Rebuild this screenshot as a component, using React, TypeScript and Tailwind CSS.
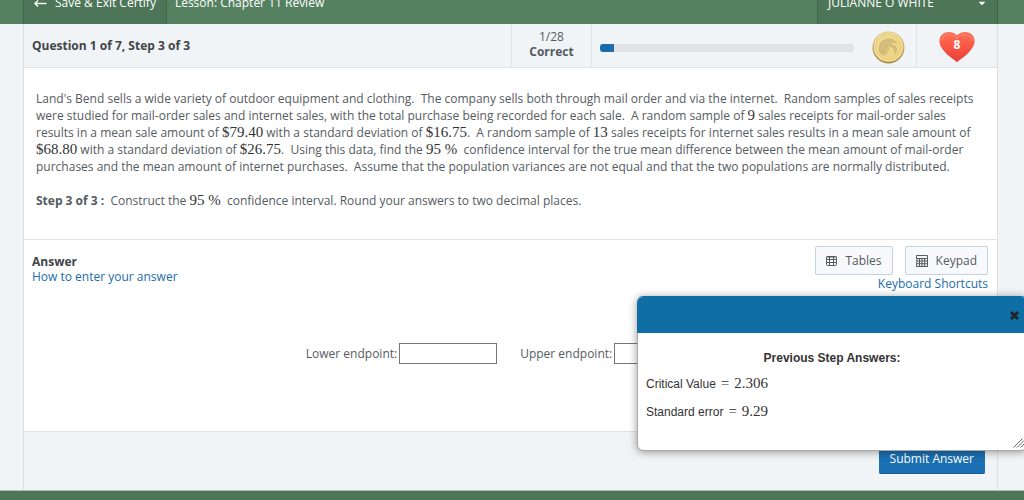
import React, { useState } from "react";
import { FaCaretDown } from "react-icons/fa";

const MathText = ({ children }: { children: React.ReactNode }) => (
  <span className="font-['Liberation_Serif',serif] text-[15px] leading-none text-[#333]">
    {children}
  </span>
);

const BackArrow = () => (
  <svg width="13" height="9" viewBox="0 0 13 9" fill="none" stroke="currentColor">
    <path d="M1 4.5h11.5" strokeWidth="1.4" />
    <path d="M4 1.5 1 4.5l3 3" strokeWidth="1.4" />
  </svg>
);

const Coin = () => (
  <svg width="33" height="33" viewBox="0 0 33 33" role="img" aria-label="Coin">
    <defs>
      <linearGradient id="coinRim" x1="0" y1="0" x2="0" y2="1">
        <stop offset="0" stopColor="#d9c07c" />
        <stop offset="1" stopColor="#a88a48" />
      </linearGradient>
      <linearGradient id="coinFace" x1="0" y1="0" x2="1" y2="1">
        <stop offset="0" stopColor="#f0dc9a" />
        <stop offset="1" stopColor="#ecd07c" />
      </linearGradient>
    </defs>
    <circle cx="16.5" cy="16.5" r="16" fill="url(#coinRim)" />
    <circle cx="16.5" cy="16" r="14.8" fill="#f3df95" />
    <circle cx="16.5" cy="16" r="12.8" fill="url(#coinFace)" stroke="#e2c97e" strokeWidth="0.8" />
    <path
      d="M7 20C6 13 10 8 16 7.500c4-.3 7.500 1.500 9.500 5-3-1-5.500-.8-7 .5 3 .2 6 2 6.500 5 .3 2-.5 4-2 5.500-.5-4-2-7-5-8.500-.5 4-2.500 7.500-6 9.500-2.500-.5-4.500-2-5-4.500z"
      fill="#d2ba78"
    />
    <path d="M9.500 19c1-5 4-7.500 9-8" fill="none" stroke="#e4ce8c" strokeWidth="1" />
    <path d="M12.500 21.500c2.500-2 4-4.500 4.500-7.500" fill="none" stroke="#e4ce8c" strokeWidth="1" />
  </svg>
);

const Heart = () => (
  <div className="relative h-8 w-9">
    <svg width="36" height="32" viewBox="0 0 36 32">
      <defs>
        <linearGradient id="heartFill" x1="0" y1="0" x2="0" y2="1">
          <stop offset="0" stopColor="#fb7358" />
          <stop offset="0.5" stopColor="#f95545" />
          <stop offset="1" stopColor="#e83d38" />
        </linearGradient>
      </defs>
      <path
        d="M18 31.200C14 27.500 8 24.500 3.800 18.500 1.500 15.200.4 13 .4 10.300.4 4.800 4.500 1 9.500 1c3.500 0 6.500 1.200 8.500 3.300C20 2.200 23 1 26.500 1c5 0 9.100 3.800 9.100 9.300 0 2.700-1.100 4.900-3.400 8.200C28 24.500 22 27.500 18 31.200z"
        fill="url(#heartFill)"
      />
      <path d="M3 10c.3-4 3-6.500 6.500-6.500S16 5 18 7c2-2 5-3.500 8.500-3.500S32.700 6 33 10" fill="none" stroke="#fc8468" strokeWidth="1.200" />
    </svg>
    <span className="absolute inset-0 flex items-center justify-center pb-1 text-xs font-bold text-white">
      8
    </span>
  </div>
);

const TableIcon = () => (
  <svg width="11" height="10" viewBox="0 0 11 10" fill="none" stroke="#555b61">
    <rect x="0.500" y="0.500" width="10" height="9" rx="1" />
    <path d="M0.500 1h10M0.500 3.500h10M0.500 6.500h10M3.500 0.500v9M7.500 0.500v9" />
  </svg>
);

const KeypadIcon = () => (
  <svg width="12" height="12" viewBox="0 0 12 12" fill="none" stroke="#555b61">
    <path d="M0.500 0.500h11v3h-11zM1 3.500l-.5 8h11v-8" />
    <path d="M0.800 6h10.700M0.800 8.700h10.700M3.500 3.500v8M6 3.500v8M8.700 3.500v8" />
  </svg>
);

const CloseIcon = () => (
  <svg width="9" height="9" viewBox="0 0 9 9" stroke="#222" strokeWidth="2.800">
    <path d="M1 1l7 7M8 1L1 8" />
  </svg>
);

const toolButton =
  "flex h-[29px] cursor-pointer items-center gap-2 rounded-[2px] border border-[#c3d2dc] bg-[#f7f9fc] px-[10px] text-xs text-[#555b61]";

const StepAnswers = ({ onClose }: { onClose: () => void }) => (
  <div
    role="dialog"
    aria-label="Previous Step Answers"
    className="absolute top-[296px] -right-[3px] h-[155px] w-[390px] rounded-md border border-[#aaa] border-t-[#0f6fa4] bg-white font-['Liberation_Sans',sans-serif] text-xs text-[#333] shadow-[0_1px_8px_rgba(0,0,0,0.4)]"
  >
    <div className="-mx-px flex h-9 items-center justify-end rounded-t-md bg-[#0f6fa4] pr-2">
      <button type="button" aria-label="Close" onClick={onClose} className="cursor-pointer">
        <CloseIcon />
      </button>
    </div>
    <div className="px-2 pt-[17px]">
      <h2 className="text-center leading-4 font-bold">Previous Step Answers:</h2>
      <p className="mt-2 flex items-baseline gap-[5px] leading-5">
        Critical Value <MathText>=</MathText> <MathText>2.306</MathText>
      </p>
      <p className="mt-2 flex items-baseline gap-[5px] leading-5">
        Standard error <MathText>=</MathText> <MathText>9.29</MathText>
      </p>
    </div>
    <svg className="absolute right-[2px] bottom-[2px]" width="11" height="10" viewBox="0 0 11 10" stroke="#666">
      <path d="M0.500 9.500l9-9M4 9.500l7-7M7.500 9.500l3.500-3.500" />
    </svg>
  </div>
);

const App = () => {
  const [showSteps, setShowSteps] = useState(true);

  return (
    <div className="relative flex min-h-screen flex-col overflow-hidden bg-[#f0f4f7] font-['Open_Sans',sans-serif] text-xs text-[#555b61]">
      <header className="-mt-[18px] flex h-[42px] shrink-0 bg-[#558160] pr-[26px] pl-[23px] text-white">
        <a href="#exit" className="flex items-center gap-2 border-x border-[#406648] bg-[#4d7658] px-[10px]">
          <BackArrow />
          Save &amp; Exit Certify
        </a>
        <div className="flex flex-1 items-center px-2">Lesson: Chapter 11 Review</div>
        <button
          type="button"
          className="flex w-[181px] cursor-pointer items-center justify-between border-x border-[#406648] bg-[#4d7658] px-[10px]"
        >
          JULIANNE O WHITE
          <FaCaretDown className="text-[10px]" />
        </button>
      </header>

      <main className="mr-[26px] ml-[23px] flex flex-1 flex-col border-x border-[#dcdfe3]">
        <div className="flex h-11 items-stretch border-b border-[#dfe2e6]">
          <h1 className="flex flex-1 items-center px-2 font-bold text-[#404448]">
            Question 1 of 7, Step 3 of 3
          </h1>
          <div className="flex w-20 flex-col items-center justify-center border-l border-[#dfe2e6] pb-1 leading-[15px]">
            <span>1/28</span>
            <b>Correct</b>
          </div>
          <div className="flex w-[325px] items-center gap-[18px] border-l border-[#dfe2e6] pt-1 pr-[11px] pl-2">
            <div className="h-2 flex-1 overflow-hidden rounded-[3px] bg-[#e1e2e6]">
              <div className="h-2 w-[14px] bg-[#1b6cab]" />
            </div>
            <Coin />
          </div>
          <div className="flex w-[81px] items-center justify-center border-l border-[#dfe2e6] pt-[2px]">
            <Heart />
          </div>
        </div>

        <section className="border-b border-[#dfe2e6] bg-white pt-[22px] pr-5 pb-[30px] pl-3 leading-[17px]">
          <p>
            Land's Bend sells a wide variety of outdoor equipment and clothing.&nbsp; The company sells both through mail
            order and via the internet.&nbsp; Random samples of sales receipts were studied for mail-order sales and
            internet sales, with the total purchase being recorded for each sale.&nbsp; A random sample of{" "}
            <MathText>9</MathText> sales receipts for mail-order sales results in a mean sale amount of{" "}
            <MathText>$79.40</MathText> with a standard deviation of <MathText>$16.75</MathText>.&nbsp; A random sample
            of <MathText>13</MathText> sales receipts for internet sales results in a mean sale amount of{" "}
            <MathText>$68.80</MathText> with a standard deviation of <MathText>$26.75</MathText>.&nbsp; Using this data,
            find the <MathText>95 %</MathText>&nbsp; confidence interval for the true mean difference between the mean
            amount of mail-order purchases and the mean amount of internet purchases.&nbsp; Assume that the population
            variances are not equal and that the two populations are normally distributed.
          </p>
          <p className="mt-[17px]">
            <b>Step 3 of 3 :</b>&nbsp; Construct the <MathText>95 %</MathText>&nbsp; confidence interval. Round your
            answers to two decimal places.
          </p>
        </section>

        <section className="h-48 border-b border-[#dfe2e6] bg-white pt-[6px] pr-[9px] pl-2">
          <div className="flex justify-between">
            <div className="pt-2 leading-[15px]">
              <h2 className="font-bold text-[#404448]">Answer</h2>
              <a href="#help" className="text-[#1b6cab]">
                How to enter your answer
              </a>
            </div>
            <div className="flex flex-col items-end">
              <div className="flex gap-3">
                <button type="button" className={toolButton}>
                  <TableIcon />
                  Tables
                </button>
                <button type="button" className={toolButton}>
                  <KeypadIcon />
                  Keypad
                </button>
              </div>
              <a href="#shortcuts" className="leading-[18px] text-[#1b6cab]">
                Keyboard Shortcuts
              </a>
            </div>
          </div>
          <div className="mt-[50px] flex justify-center gap-[23px] pr-[2px]">
            <label className="flex items-center gap-[2px]">
              Lower endpoint:
              <input type="text" className="h-[21px] w-[98px] border border-[#767676] bg-white px-1" />
            </label>
            <label className="flex items-center gap-[2px]">
              Upper endpoint:
              <input type="text" className="h-[21px] w-[98px] border border-[#767676] bg-white px-1" />
            </label>
          </div>
        </section>

        <div className="flex flex-1 items-start justify-end pt-3 pr-3 pb-4">
          <button
            type="button"
            className="h-[30px] cursor-pointer rounded-[2px] border-b border-[#155a92] bg-[#1b70b3] px-[11px] font-medium text-white"
          >
            Submit Answer
          </button>
        </div>
      </main>

      <footer className="h-[10px] border-t border-[#aebcb4] bg-[#4d7658]" />

      {showSteps && <StepAnswers onClose={() => setShowSteps(false)} />}
    </div>
  );
};

export default App;
